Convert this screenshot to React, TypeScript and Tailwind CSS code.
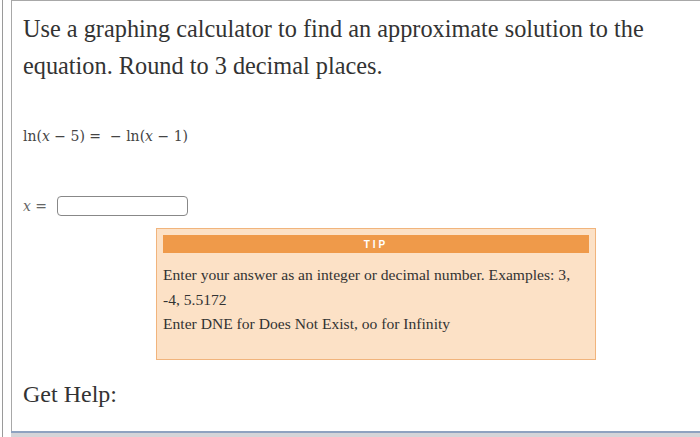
import React from "react";

export default function App() {
  const serif = { fontFamily: '"Liberation Serif", "Times New Roman", serif' };
  return (
    <div className="w-[700px] h-[437px] bg-white overflow-hidden flex" style={serif}>
      <div className="w-[2px] shrink-0" />
      <div className="w-[1px] shrink-0 bg-[#9a9a9a]" />
      <div className="w-[8px] shrink-0" />
      <div className="flex-1 flex flex-col">
        <div className="flex-1 border-l border-t border-[#a8a8a8] pl-[11px] text-[#333]">
          <div className="text-[24.3px] leading-[37px] pt-[9px] pr-[10px]">
            Use a graphing calculator to find an approximate solution to the equation. Round to 3 decimal places.
          </div>
          <div
            className="mt-[42px] text-[#444] flex items-center h-[20px]"
            style={{ fontFamily: '"DejaVu Serif", "Liberation Serif", serif' }}
          >
            <span className="text-[14px]">ln(<i>x</i> − 5) = &nbsp;− ln(<i>x</i> − 1)</span>
          </div>
          <div className="mt-[50px] flex items-center h-[20px]">
            <span className="text-[14px] text-[#666]" style={{ fontFamily: '"DejaVu Serif", serif' }}>
              <i>x</i> =
            </span>
            <div className="ml-[10px] w-[131px] h-[20px] border border-[#888] rounded-[4px] bg-white" />
          </div>
          <div className="mt-[12px] ml-[133px] w-[440px] h-[132px] bg-[#fce1c6] border border-[#f1b47c] p-[6px]">
            <div
              className="h-[18px] bg-[#ef9a4a] text-white text-[10px] font-bold tracking-[3px] flex items-center justify-center"
              style={{ fontFamily: '"Liberation Sans", Arial, sans-serif' }}
            >
              TIP
            </div>
            <div className="text-[15.6px] leading-[24.5px] text-[#333] mt-[10px]">
              <div className="whitespace-nowrap">Enter your answer as an integer or decimal number. Examples: 3,</div>
              <div>-4, 5.5172</div>
              <div>Enter DNE for Does Not Exist, oo for Infinity</div>
            </div>
          </div>
          <div className="mt-[18px] text-[24px] leading-[32px]">Get Help:</div>
        </div>
        <div className="h-[2px] bg-[#8ea2c0]" />
        <div className="h-[4px] bg-[#d4d4d8]" />
      </div>
    </div>
  );
}
